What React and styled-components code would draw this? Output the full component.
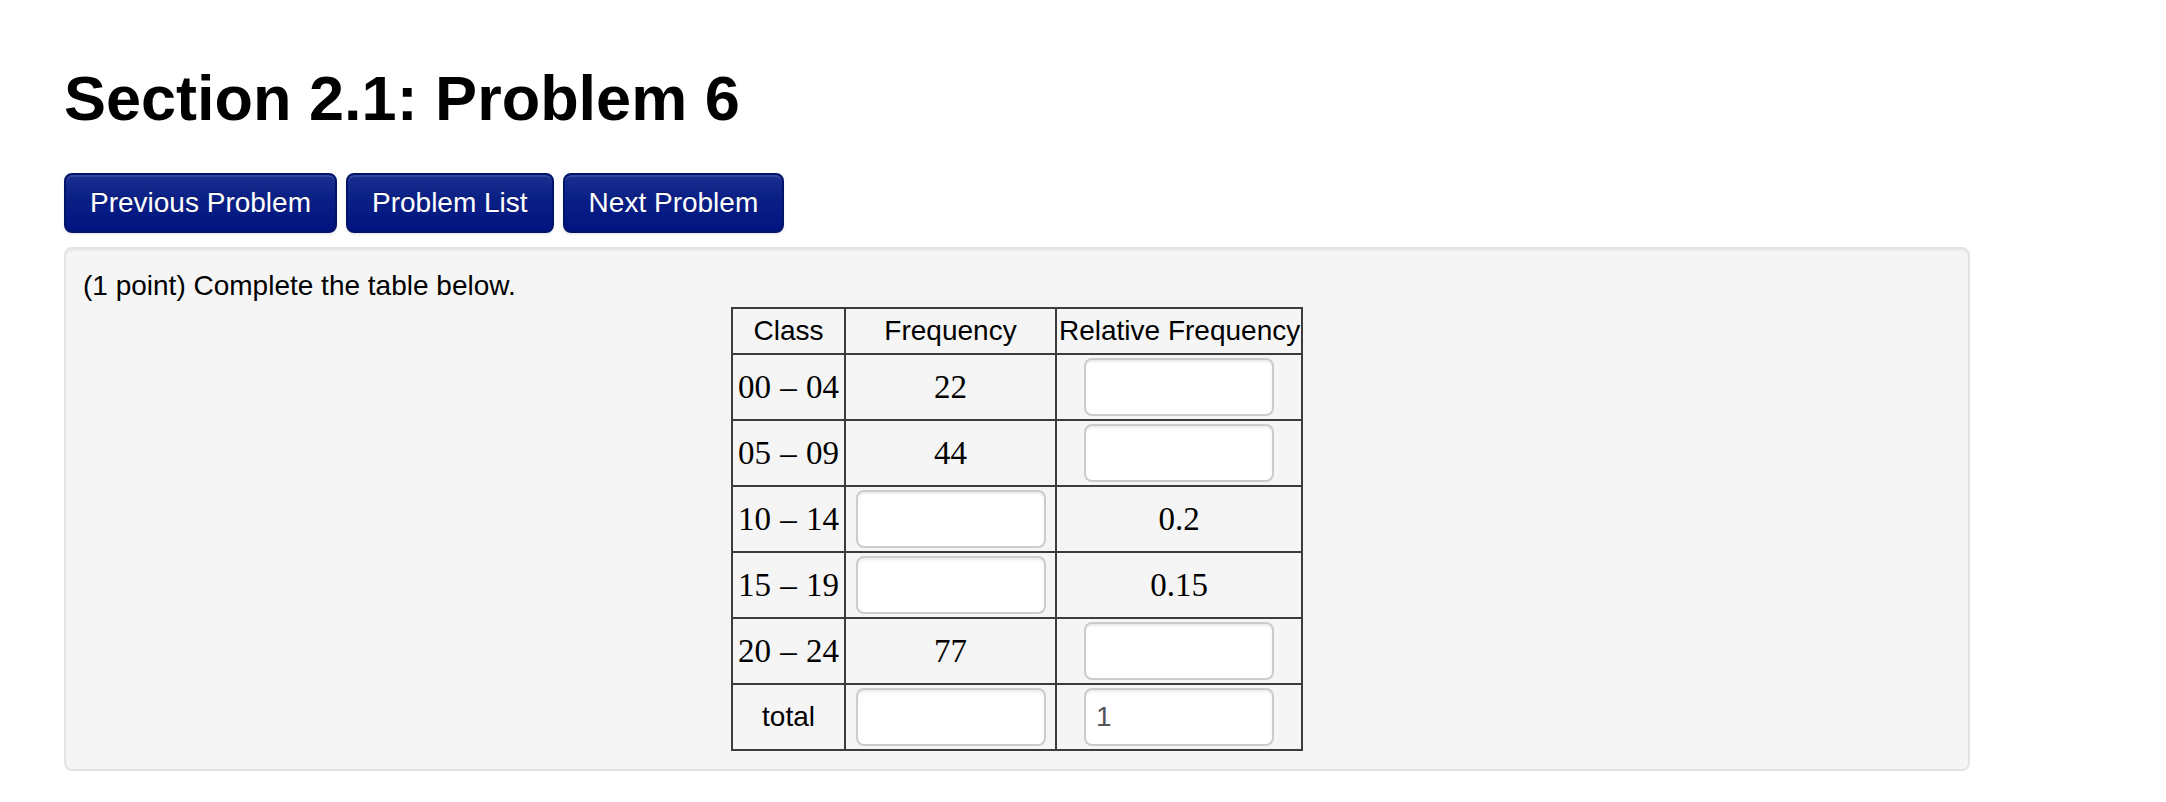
import React from "react";
import styled, { createGlobalStyle } from "styled-components";

const GlobalStyle = createGlobalStyle`
    body {
        margin: 0;
        background: #ffffff;
        font-family: "Liberation Sans", Arial, sans-serif;
        color: #000;
    }
`

const rows = [
    { cls: "00 – 04", freq: "22", rel: null },
    { cls: "05 – 09", freq: "44", rel: null },
    { cls: "10 – 14", freq: null, rel: "0.2" },
    { cls: "15 – 19", freq: null, rel: "0.15" },
    { cls: "20 – 24", freq: "77", rel: null },
];

const App = () => {
    return(
        <Page>
            <GlobalStyle />
            <Title>Section 2.1: Problem 6</Title>
            <NavBar>
                <NavButton>Previous Problem</NavButton>
                <NavButton>Problem List</NavButton>
                <NavButton>Next Problem</NavButton>
            </NavBar>
            <Well>
                <Prompt>(1 point) Complete the table below.</Prompt>
                <FreqTable>
                    <colgroup>
                        <col style={{ width: 113 }} />
                        <col style={{ width: 211 }} />
                        <col style={{ width: 246 }} />
                    </colgroup>
                    <thead>
                        <tr>
                            <HeadCell>Class</HeadCell>
                            <HeadCell>Frequency</HeadCell>
                            <HeadCell>Relative Frequency</HeadCell>
                        </tr>
                    </thead>
                    <tbody>
                        {rows.map((r) => (
                            <tr key={r.cls}>
                                <Cell serif>{r.cls}</Cell>
                                <Cell serif>{r.freq ? r.freq : <AnswerInput />}</Cell>
                                <Cell serif>{r.rel ? r.rel : <AnswerInput />}</Cell>
                            </tr>
                        ))}
                        <tr>
                            <Cell>total</Cell>
                            <Cell><AnswerInput /></Cell>
                            <Cell><AnswerInput defaultValue="1" /></Cell>
                        </tr>
                    </tbody>
                </FreqTable>
            </Well>
        </Page>
    )
}

const Page = styled.div`
    padding: 62px 196px 20px 64px;
`

const Title = styled.h1`
    margin: 0;
    font-size: 63px;
    line-height: 72px;
    font-weight: bold;
`

const NavBar = styled.div`
    display: flex;
    gap: 9px;
    margin-top: 39px;
`

const NavButton = styled.button`
    height: 60px;
    padding: 0 24px;
    border: 2px solid #00146a;
    border-radius: 8px;
    background: linear-gradient(to bottom, #1a2f8e 0%, #0a1f86 45%, #00137f 100%);
    color: #ffffff;
    font-family: "Liberation Sans", Arial, sans-serif;
    font-size: 28px;
    text-shadow: 0 -1px 0 rgba(0, 0, 0, 0.25);
    box-shadow: inset 0 2px 0 rgba(255, 255, 255, 0.12), 0 2px 3px rgba(0, 0, 0, 0.08);
    cursor: pointer;
`

const Well = styled.div`
    margin-top: 14px;
    width: 1906px;
    box-sizing: border-box;
    padding: 17px 17px 18px;
    background: #f5f5f5;
    border: 2px solid #e3e3e3;
    border-radius: 8px;
    box-shadow: inset 0 2px 2px rgba(0, 0, 0, 0.05);
`

const Prompt = styled.div`
    font-size: 28px;
    line-height: 40px;
    margin-bottom: 1px;
`

const FreqTable = styled.table`
    margin: 0 auto;
    table-layout: fixed;
    width: 570px;
    border-collapse: collapse;
    border: 2px solid #3c3c3c;
`

const HeadCell = styled.th`
    height: 44px;
    padding: 0 2px;
    border: 2px solid #3c3c3c;
    font-weight: normal;
    font-size: 28px;
    text-align: center;
    white-space: nowrap;
`

const Cell = styled.td`
    height: 64px;
    padding: 0;
    border: 2px solid #3c3c3c;
    text-align: center;
    white-space: nowrap;
    font-family: ${(p) => (p.serif ? '"Liberation Serif", "Times New Roman", serif' : '"Liberation Sans", Arial, sans-serif')};
    font-size: ${(p) => (p.serif ? "33px" : "28px")};
    word-spacing: ${(p) => (p.serif ? "1px" : "0")};
`

const AnswerInput = styled.input`
    display: block;
    margin: 0 auto;
    width: 190px;
    height: 58px;
    box-sizing: border-box;
    padding: 0 10px;
    border: 2px solid #cccccc;
    border-radius: 8px;
    background: #ffffff;
    box-shadow: inset 0 2px 2px rgba(0, 0, 0, 0.075);
    font-family: "Liberation Sans", Arial, sans-serif;
    font-size: 28px;
    color: #555555;
    outline: none;
`

export default App;
